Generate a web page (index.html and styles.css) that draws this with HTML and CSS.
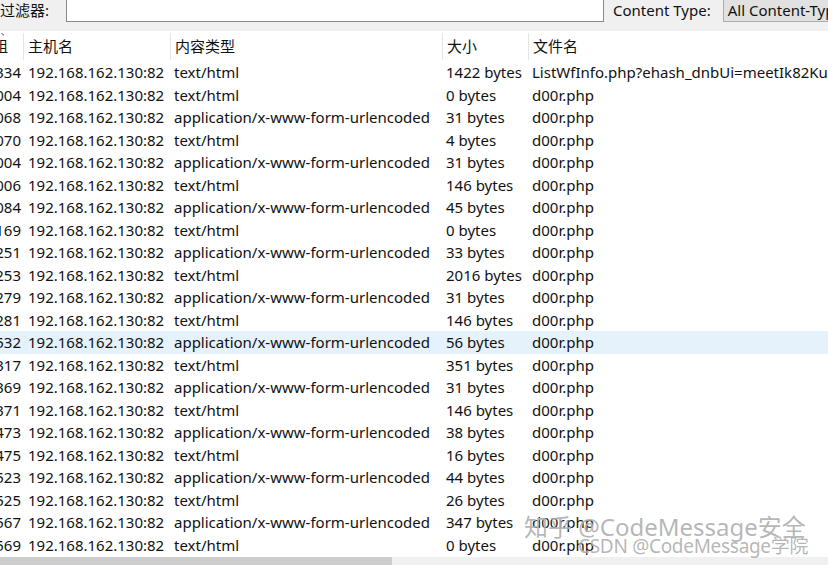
FILE: index.html
```html
<!DOCTYPE html>
<html lang="zh-CN">
<head>
<meta charset="UTF-8">
<title>导出 HTTP 对象</title>
<link rel="stylesheet" href="styles.css">
</head>
<body>

<div class="filterbar">
    <span class="label">过滤器:</span>
    <div class="textbox"></div>
    <span class="label ctype">Content Type:</span>
    <div class="combo">All Content-Types</div>
</div>

<div class="list">
    <div class="row head">
        <div class="cell num"><span>分组</span><i class="sort"></i></div>
        <div class="cell">主机名</div>
        <div class="cell">内容类型</div>
        <div class="cell">大小</div>
        <div class="cell">文件名</div>
    </div>

    <div class="row"><div class="cell num"><span>1334</span></div><div class="cell">192.168.162.130:82</div><div class="cell">text/html</div><div class="cell">1422 bytes</div><div class="cell">ListWfInfo.php?ehash_dnbUi=meetIk82Ku</div></div>
    <div class="row"><div class="cell num"><span>2004</span></div><div class="cell">192.168.162.130:82</div><div class="cell">text/html</div><div class="cell">0 bytes</div><div class="cell">d00r.php</div></div>
    <div class="row"><div class="cell num"><span>2068</span></div><div class="cell">192.168.162.130:82</div><div class="cell">application/x-www-form-urlencoded</div><div class="cell">31 bytes</div><div class="cell">d00r.php</div></div>
    <div class="row"><div class="cell num"><span>2070</span></div><div class="cell">192.168.162.130:82</div><div class="cell">text/html</div><div class="cell">4 bytes</div><div class="cell">d00r.php</div></div>
    <div class="row"><div class="cell num"><span>3004</span></div><div class="cell">192.168.162.130:82</div><div class="cell">application/x-www-form-urlencoded</div><div class="cell">31 bytes</div><div class="cell">d00r.php</div></div>
    <div class="row"><div class="cell num"><span>3006</span></div><div class="cell">192.168.162.130:82</div><div class="cell">text/html</div><div class="cell">146 bytes</div><div class="cell">d00r.php</div></div>
    <div class="row"><div class="cell num"><span>3084</span></div><div class="cell">192.168.162.130:82</div><div class="cell">application/x-www-form-urlencoded</div><div class="cell">45 bytes</div><div class="cell">d00r.php</div></div>
    <div class="row"><div class="cell num"><span>4169</span></div><div class="cell">192.168.162.130:82</div><div class="cell">text/html</div><div class="cell">0 bytes</div><div class="cell">d00r.php</div></div>
    <div class="row"><div class="cell num"><span>4251</span></div><div class="cell">192.168.162.130:82</div><div class="cell">application/x-www-form-urlencoded</div><div class="cell">33 bytes</div><div class="cell">d00r.php</div></div>
    <div class="row"><div class="cell num"><span>4253</span></div><div class="cell">192.168.162.130:82</div><div class="cell">text/html</div><div class="cell">2016 bytes</div><div class="cell">d00r.php</div></div>
    <div class="row"><div class="cell num"><span>4279</span></div><div class="cell">192.168.162.130:82</div><div class="cell">application/x-www-form-urlencoded</div><div class="cell">31 bytes</div><div class="cell">d00r.php</div></div>
    <div class="row"><div class="cell num"><span>4281</span></div><div class="cell">192.168.162.130:82</div><div class="cell">text/html</div><div class="cell">146 bytes</div><div class="cell">d00r.php</div></div>
    <div class="row hover"><div class="cell num"><span>4532</span></div><div class="cell">192.168.162.130:82</div><div class="cell">application/x-www-form-urlencoded</div><div class="cell">56 bytes</div><div class="cell">d00r.php</div></div>
    <div class="row"><div class="cell num"><span>5317</span></div><div class="cell">192.168.162.130:82</div><div class="cell">text/html</div><div class="cell">351 bytes</div><div class="cell">d00r.php</div></div>
    <div class="row"><div class="cell num"><span>5369</span></div><div class="cell">192.168.162.130:82</div><div class="cell">application/x-www-form-urlencoded</div><div class="cell">31 bytes</div><div class="cell">d00r.php</div></div>
    <div class="row"><div class="cell num"><span>5371</span></div><div class="cell">192.168.162.130:82</div><div class="cell">text/html</div><div class="cell">146 bytes</div><div class="cell">d00r.php</div></div>
    <div class="row"><div class="cell num"><span>5473</span></div><div class="cell">192.168.162.130:82</div><div class="cell">application/x-www-form-urlencoded</div><div class="cell">38 bytes</div><div class="cell">d00r.php</div></div>
    <div class="row"><div class="cell num"><span>5475</span></div><div class="cell">192.168.162.130:82</div><div class="cell">text/html</div><div class="cell">16 bytes</div><div class="cell">d00r.php</div></div>
    <div class="row"><div class="cell num"><span>5523</span></div><div class="cell">192.168.162.130:82</div><div class="cell">application/x-www-form-urlencoded</div><div class="cell">44 bytes</div><div class="cell">d00r.php</div></div>
    <div class="row"><div class="cell num"><span>5525</span></div><div class="cell">192.168.162.130:82</div><div class="cell">text/html</div><div class="cell">26 bytes</div><div class="cell">d00r.php</div></div>
    <div class="row"><div class="cell num"><span>5567</span></div><div class="cell">192.168.162.130:82</div><div class="cell">application/x-www-form-urlencoded</div><div class="cell">347 bytes</div><div class="cell">d00r.php</div></div>
    <div class="row"><div class="cell num"><span>5569</span></div><div class="cell">192.168.162.130:82</div><div class="cell">text/html</div><div class="cell">0 bytes</div><div class="cell">d00r.php</div></div>
</div>

<div class="hscroll"><div class="thumb"></div></div>

<div class="watermark">
    <span class="wm1">知乎 @CodeMessage安全</span>
    <span class="wm2">CSDN @CodeMessage学院</span>
</div>

</body>
</html>
```

FILE: styles.css
```css
* {
    margin: 0;
    padding: 0;
    box-sizing: border-box;
}

html, body {
    width: 828px;
    height: 565px;
    overflow: hidden;
}

body {
    position: relative;
    font-family: "Noto Sans", "Noto Sans CJK SC", sans-serif;
    font-size: 15px;
    color: #111;
    background: #fff;
}

/* filter bar */
.filterbar {
    height: 31px;
    background: #f0f0f0;
    display: flex;
    align-items: flex-start;
}

.filterbar .label {
    line-height: 21px;
    white-space: nowrap;
}

.textbox {
    flex: none;
    width: 538px;
    height: 22px;
    margin-left: 17px;
    background: #fff;
    border: 1px solid #8a8a8a;
    border-top: none;
}

.ctype {
    margin-left: 9px;
}

.combo {
    margin-left: 12px;
    flex: 1;
    min-width: 0;
    height: 22px;
    line-height: 21px;
    padding-left: 4px;
    background: #e1e1e1;
    border: 1px solid #adadad;
    border-top: none;
    border-right: none;
    white-space: nowrap;
    overflow: hidden;
}

/* list */
.list {
    height: 526px;
}

.row {
    display: grid;
    grid-template-columns: 24px 146px 272px 86px 1fr;
    height: 22.5px;
    line-height: 22.5px;
    white-space: nowrap;
}

.row.hover {
    background: #e5f1fb;
}

.row.head {
    height: 30px;
    line-height: 30px;
}

.cell {
    overflow: hidden;
    padding-left: 4px;
}

.cell.num {
    display: flex;
    justify-content: flex-end;
    padding-left: 0;
    padding-right: 3px;
}

.head .cell {
    border-left: 1px solid #e5e5e5;
    height: 27px;
    margin-top: 2px;
    line-height: 27px;
    position: relative;
}

.head .cell.num {
    border-left: none;
    border-right: 1px solid #e5e5e5;
    padding-right: 15px;
}

.head .cell.num + .cell {
    border-left: none;
}

.sort {
    position: absolute;
    left: -3px;
    top: -1px;
    width: 6px;
    height: 6px;
    border-left: 1px solid #777;
    border-top: 1px solid #777;
    transform: rotate(45deg);
}

/* horizontal scroll bar */
.hscroll {
    height: 8px;
    background: #f0f0f0;
}

.thumb {
    width: 392px;
    height: 100%;
    background: #cdcdcd;
}

/* watermark over the list */
.watermark {
    position: absolute;
    left: 524px;
    top: 513px;
    color: rgba(110, 110, 110, 0.5);
    text-shadow: 0 0 1px rgba(255, 255, 255, 0.9);
    font-family: "Noto Sans", "Noto Sans CJK SC", sans-serif;
    pointer-events: none;
}

.wm1 {
    display: block;
    font-size: 24px;
    line-height: 28px;
    white-space: nowrap;
}

.wm2 {
    display: block;
    margin-left: 54px;
    margin-top: -7px;
    font-size: 19px;
    line-height: 24px;
    letter-spacing: -0.3px;
    white-space: nowrap;
}
```
